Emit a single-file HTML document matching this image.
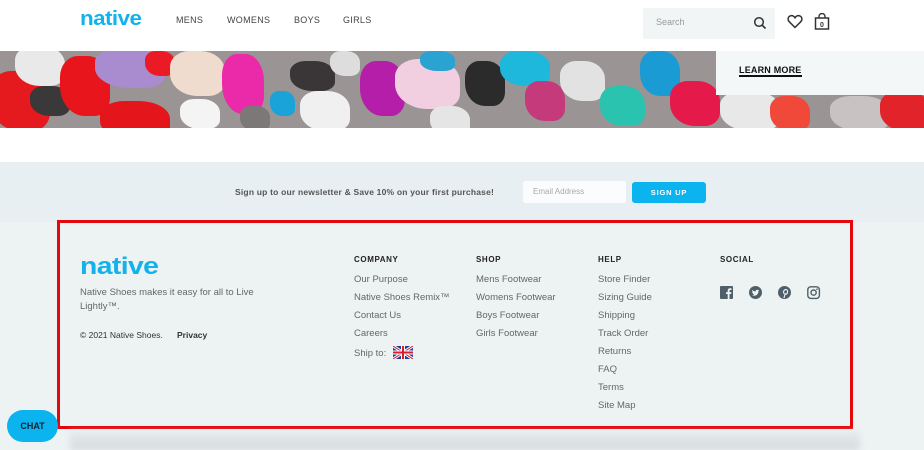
<!DOCTYPE html>
<html><head><meta charset="utf-8"><style>
*{margin:0;padding:0;box-sizing:border-box}
body{width:924px;height:450px;overflow:hidden;background:#edf3f3;font-family:"Liberation Sans",sans-serif;position:relative}
.a{position:absolute}
.hdr{left:0;top:0;width:924px;height:51px;background:#fff}
.logo{font-family:"Liberation Sans",sans-serif;font-weight:900;color:#12b2ec;letter-spacing:-.5px;transform-origin:0 0}
.nav{top:15px;font-size:9px;color:#444;letter-spacing:.3px}
.banner{left:0;top:51px;width:924px;height:77px;overflow:hidden;background:#9a9494}
.b{position:absolute;border-radius:35% 45% 30% 50%}
.nl{left:0;top:162px;width:924px;height:60px;background:#e7eff2}
.col h4{font-size:8px;font-weight:900;color:#222;letter-spacing:.6px;margin-bottom:10px}
.col div{font-size:9.5px;color:#666;height:18px;line-height:12px}
</style></head><body>
<div class="a hdr"></div>
<div class="a logo" style="left:80px;top:8px;font-size:20px;transform:scaleX(1.12)">native</div>
<div class="a nav" style="left:176px">MENS</div>
<div class="a nav" style="left:227px">WOMENS</div>
<div class="a nav" style="left:294px">BOYS</div>
<div class="a nav" style="left:343px">GIRLS</div>
<div class="a" style="left:643px;top:8px;width:132px;height:31px;background:#f2f5f6;border-radius:2px"></div>
<div class="a" style="left:656px;top:17px;font-size:9px;color:#999">Search</div>
<svg class="a" style="left:753px;top:16px" width="14" height="14" viewBox="0 0 14 14"><circle cx="6" cy="6" r="4.3" fill="none" stroke="#333" stroke-width="1.5"/><path d="M9 9l3.5 3.5" stroke="#333" stroke-width="1.6"/></svg>
<svg class="a" style="left:787px;top:14px" width="16" height="15" viewBox="0 0 16 15"><path d="M8 13.5L2.2 7.7C.5 6 .8 3 3 2c1.9-.8 3.8 0 5 1.8C9.2 2 11.1 1.2 13 2c2.2 1 2.5 4 .8 5.7z" fill="none" stroke="#333" stroke-width="1.5"/></svg>
<svg class="a" style="left:814px;top:13px" width="16" height="17" viewBox="0 0 16 17"><path d="M5 5V3.5a3 3 0 016 0V5" fill="none" stroke="#333" stroke-width="1.4"/><rect x="1.5" y="5" width="13" height="11" fill="none" stroke="#333" stroke-width="1.5"/><text x="8" y="14" font-size="7" font-weight="bold" text-anchor="middle" fill="#333" font-family="Liberation Sans">0</text></svg>

<div class="a banner">
<div class="b" style="left:-10px;top:20px;width:60px;height:60px;background:#e51a1e"></div>
<div class="b" style="left:15px;top:-5px;width:50px;height:40px;background:#e9e9e9"></div>
<div class="b" style="left:30px;top:35px;width:40px;height:30px;background:#3a3838"></div>
<div class="b" style="left:60px;top:5px;width:50px;height:60px;background:#e8161c"></div>
<div class="b" style="left:95px;top:-3px;width:70px;height:40px;background:#a98ccf"></div>
<div class="b" style="left:100px;top:50px;width:70px;height:40px;background:#e4151b"></div>
<div class="b" style="left:145px;top:0;width:30px;height:25px;background:#ea1b24"></div>
<div class="b" style="left:170px;top:0;width:55px;height:45px;background:#f0dbcf"></div>
<div class="b" style="left:180px;top:48px;width:40px;height:30px;background:#f4f4f4"></div>
<div class="b" style="left:222px;top:3px;width:42px;height:60px;background:#ea2aa8"></div>
<div class="b" style="left:240px;top:55px;width:30px;height:25px;background:#7d7878"></div>
<div class="b" style="left:270px;top:40px;width:25px;height:25px;background:#1aa3d8"></div>
<div class="b" style="left:290px;top:10px;width:45px;height:30px;background:#3a3637"></div>
<div class="b" style="left:300px;top:40px;width:50px;height:40px;background:#f0f0f0"></div>
<div class="b" style="left:330px;top:0;width:30px;height:25px;background:#ddd"></div>
<div class="b" style="left:360px;top:10px;width:45px;height:55px;background:#b51ea9"></div>
<div class="b" style="left:395px;top:8px;width:65px;height:50px;background:#f1cfe0"></div>
<div class="b" style="left:420px;top:0;width:35px;height:20px;background:#2aa3d3"></div>
<div class="b" style="left:430px;top:55px;width:40px;height:30px;background:#e5e5e5"></div>
<div class="b" style="left:465px;top:10px;width:40px;height:45px;background:#2c2b2c"></div>
<div class="b" style="left:500px;top:0;width:50px;height:35px;background:#1db8dc"></div>
<div class="b" style="left:525px;top:30px;width:40px;height:40px;background:#c43a7a"></div>
<div class="b" style="left:560px;top:10px;width:45px;height:40px;background:#e2e2e2"></div>
<div class="b" style="left:600px;top:35px;width:45px;height:40px;background:#2ac3b0"></div>
<div class="b" style="left:640px;top:0;width:40px;height:45px;background:#1a9bd4"></div>
<div class="b" style="left:670px;top:30px;width:50px;height:45px;background:#e5194a"></div>
<div class="b" style="left:720px;top:40px;width:60px;height:40px;background:#e8e8e8"></div>
<div class="b" style="left:770px;top:45px;width:40px;height:35px;background:#f0493a"></div>
<div class="b" style="left:830px;top:45px;width:60px;height:35px;background:#c8c2c2"></div>
<div class="b" style="left:880px;top:40px;width:50px;height:40px;background:#e2242a"></div>
</div>
<div class="a" style="left:716px;top:51px;width:208px;height:44px;background:#f4f7f8"></div>
<div class="a" style="left:739px;top:65px;font-size:9px;font-weight:900;color:#111;border-bottom:2px solid #111;line-height:10px;letter-spacing:.2px">LEARN MORE</div>
<div class="a" style="left:0;top:128px;width:924px;height:34px;background:#fff"></div>

<div class="a nl"></div>
<div class="a" style="left:235px;top:187px;font-size:8.5px;font-weight:bold;color:#555;letter-spacing:.2px">Sign up to our newsletter &amp; Save 10% on your first purchase!</div>
<div class="a" style="left:523px;top:181px;width:103px;height:22px;background:#fafcfd;border-radius:2px"></div>
<div class="a" style="left:533px;top:187px;font-size:8px;color:#aaa">Email Address</div>
<div class="a" style="left:632px;top:182px;width:74px;height:21px;background:#0bb3ef;border-radius:3px;color:#fff;font-size:7.5px;font-weight:bold;text-align:center;line-height:21px;letter-spacing:.8px">SIGN UP</div>

<div class="a" style="left:57px;top:220px;width:796px;height:209px;border:3px solid #e3080e"></div>
<div class="a logo" style="left:80px;top:253px;font-size:24px;transform:scaleX(1.18)">native</div>
<div class="a" style="left:80px;top:286px;font-size:9.5px;color:#666;line-height:14px;width:200px">Native Shoes makes it easy for all to Live Lightly™.</div>
<div class="a" style="left:80px;top:330px;font-size:8.5px;color:#333">© 2021 Native Shoes.</div>
<div class="a" style="left:177px;top:330px;font-size:8.5px;color:#333;font-weight:bold">Privacy</div>

<div class="a col" style="left:354px;top:255px"><h4>COMPANY</h4><div>Our Purpose</div><div>Native Shoes Remix™</div><div>Contact Us</div><div>Careers</div><div>Ship to: <svg width="20" height="13" viewBox="0 0 20 13" style="vertical-align:-3px;margin-left:4px"><rect width="20" height="13" fill="#1f3d9a"/><path d="M0 0L20 13M20 0L0 13" stroke="#fff" stroke-width="3"/><path d="M0 0L20 13M20 0L0 13" stroke="#d81d2c" stroke-width="1"/><path d="M10 0v13M0 6.5h20" stroke="#fff" stroke-width="4"/><path d="M10 0v13M0 6.5h20" stroke="#d81d2c" stroke-width="2"/></svg></div></div>
<div class="a col" style="left:476px;top:255px"><h4>SHOP</h4><div>Mens Footwear</div><div>Womens Footwear</div><div>Boys Footwear</div><div>Girls Footwear</div></div>
<div class="a col" style="left:598px;top:255px"><h4>HELP</h4><div>Store Finder</div><div>Sizing Guide</div><div>Shipping</div><div>Track Order</div><div>Returns</div><div>FAQ</div><div>Terms</div><div>Site Map</div></div>
<div class="a col" style="left:720px;top:255px"><h4>SOCIAL</h4></div>
<svg class="a" style="left:720px;top:286px" width="14" height="14" viewBox="0 0 14 14"><rect width="13" height="13" rx="1" fill="#4f5f6a"/><path d="M9.5 13V8h1.6l.3-1.9H9.5V5c0-.6.2-1 1-1h1V2.3c-.3 0-.8-.1-1.4-.1-1.5 0-2.4.9-2.4 2.5v1.4H6.1V8h1.6v5z" fill="#edf3f3"/></svg>
<svg class="a" style="left:749px;top:286px" width="14" height="14" viewBox="0 0 14 14"><circle cx="6.5" cy="6.5" r="6.5" fill="#4f5f6a"/><path d="M3 9c1.5 1 4 1 5.3-.6 1-1.1 1.2-2.6 1.1-3.3l.9-.8-1 .2.7-.8-1 .3C8.4 3.4 6.6 3.8 6.6 5.5 5 5.4 4 4.7 3.3 3.9c-.5 1 0 1.8.5 2.1H3.2c0 .8.6 1.3 1.2 1.5H3.8c.2.6.8 1 1.4 1C4.7 8.9 3.9 9.1 3 9z" fill="#edf3f3"/></svg>
<svg class="a" style="left:778px;top:286px" width="14" height="14" viewBox="0 0 14 14"><circle cx="6.5" cy="6.5" r="6.5" fill="#4f5f6a"/><path d="M6 12l1.2-4.8M5.6 7.6c-.6-1.8.5-4 2.2-4 2 0 2.2 2.4 1.3 3.8-.8 1.3-2.3 1-2.2-.5" fill="none" stroke="#edf3f3" stroke-width="1.1"/></svg>
<svg class="a" style="left:807px;top:286px" width="14" height="14" viewBox="0 0 14 14"><rect x=".8" y=".8" width="11.6" height="11.6" rx="3" fill="none" stroke="#4f5f6a" stroke-width="1.4"/><circle cx="6.6" cy="6.6" r="2.6" fill="none" stroke="#4f5f6a" stroke-width="1.4"/><circle cx="10" cy="3.2" r=".8" fill="#4f5f6a"/></svg>

<div class="a" style="left:70px;top:432px;width:790px;height:18px;background:linear-gradient(#e4e9ea,#d6dbdd);filter:blur(3px)"></div>
<div class="a" style="left:7px;top:410px;width:51px;height:32px;background:#0bb3ef;border-radius:16px;color:#123;font-size:9px;font-weight:bold;text-align:center;line-height:32px">CHAT</div>
</body></html>
